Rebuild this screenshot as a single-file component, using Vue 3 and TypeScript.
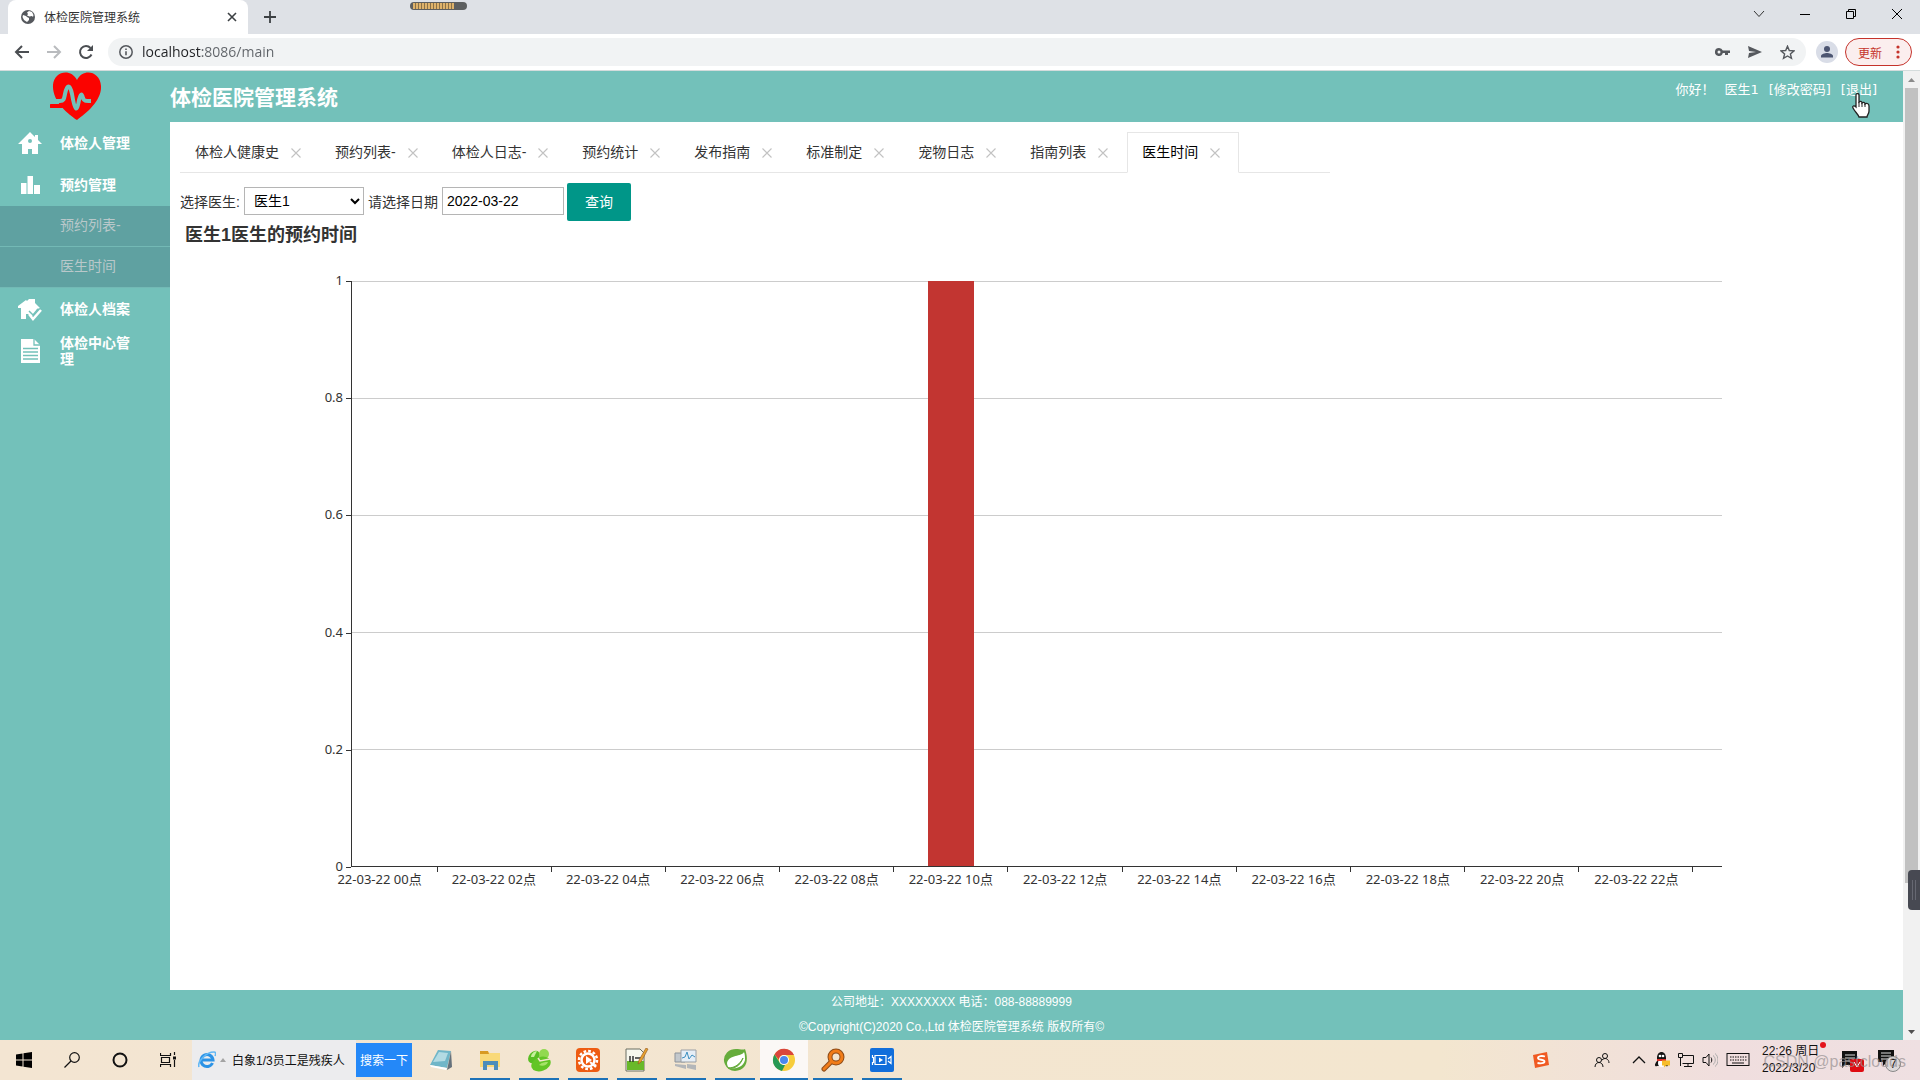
<script setup lang="ts">
import { ref } from 'vue'

interface PageTab {
  title: string
}

const tabs: PageTab[] = [
  { title: '体检人健康史' },
  { title: '预约列表-' },
  { title: '体检人日志-' },
  { title: '预约统计' },
  { title: '发布指南' },
  { title: '标准制定' },
  { title: '宠物日志' },
  { title: '指南列表' },
  { title: '医生时间' },
]
const activeTab = ref(tabs.length - 1)

const doctor = ref('医生1')
const date = ref('2022-03-22')
const address = ref('localhost:8086/main')

const levels = ['1', '0.8', '0.6', '0.4', '0.2']
const hours = Array.from({ length: 24 }, (_, i) => ({
  hour: i,
  value: i === 10 ? 1 : 0,
}))
const labels = hours
  .filter((h) => h.hour % 2 === 0)
  .map((h) => `22-03-22 ${String(h.hour).padStart(2, '0')}点`)
</script>

<template>
  <div class="screen">
    <div class="tabstrip">
      <div class="browser-tab">
        <svg width="16" height="16" viewBox="0 0 16 16">
          <circle cx="8" cy="8" r="7" fill="#55585d" />
          <path d="M3 6l3 1 1 1 2 1v2l-2 2-3-2-1.500-3zM9 2L7 3.500l1 1.500-1 1.500 2.500 1L12 7l1 1 .5-2-1.500-3z" fill="#fff" />
        </svg>
        <span class="browser-title">体检医院管理系统</span>
        <button class="plain" aria-label="关闭标签页">
          <svg width="10" height="10" viewBox="0 0 10 10"><path d="M1 1l8 8M9 1l-8 8" stroke="#3c4043" stroke-width="1.6" /></svg>
        </button>
      </div>
      <button class="plain newtab" aria-label="新标签页">
        <svg width="14" height="14" viewBox="0 0 14 14"><path d="M7 1v12M1 7h12" stroke="#3c4043" stroke-width="1.8" /></svg>
      </button>
      <div class="window-buttons">
        <button class="plain" aria-label="搜索标签页"><svg width="12" height="12" viewBox="0 0 12 12"><path d="M1 3l5 5.500 5-5.500" fill="none" stroke="#333" /></svg></button>
        <button class="plain" aria-label="最小化"><svg width="12" height="12" viewBox="0 0 12 12"><path d="M1 6.500h10" stroke="#000" /></svg></button>
        <button class="plain" aria-label="还原"><svg width="12" height="12" viewBox="0 0 12 12"><path d="M1.500 3.500h7v7h-7zM3.500 3.500v-2h7v7h-2" fill="none" stroke="#000" /></svg></button>
        <button class="plain" aria-label="关闭"><svg width="12" height="12" viewBox="0 0 12 12"><path d="M1 1l10 10M11 1L1 11" stroke="#000" /></svg></button>
      </div>
      <div class="recorder"><i></i></div>
    </div>

    <div class="toolbar">
      <button class="plain" aria-label="后退"><svg width="16" height="16" viewBox="0 0 16 16"><path d="M15 8H2M8 2L2 8l6 6" fill="none" stroke="#4b4e52" stroke-width="2" /></svg></button>
      <button class="plain" aria-label="前进"><svg width="16" height="16" viewBox="0 0 16 16"><path d="M1 8h13M8 2l6 6-6 6" fill="none" stroke="#b9bbbe" stroke-width="2" /></svg></button>
      <button class="plain" aria-label="刷新"><svg width="16" height="16" viewBox="0 0 16 16"><path d="M13.500 10.500A6 6 0 1 1 12.500 4" fill="none" stroke="#4b4e52" stroke-width="2" /><path d="M15 1v6H9z" fill="#4b4e52" /></svg></button>
      <div class="omnibox">
        <svg width="14" height="14" viewBox="0 0 14 14"><circle cx="7" cy="7" r="6.200" fill="none" stroke="#55585d" stroke-width="1.500" /><path d="M7 6.200v4M7 3.500v1.500" stroke="#55585d" stroke-width="1.600" /></svg>
        <input v-model="address" class="address" type="text" aria-label="地址栏" />
        <svg width="15" height="10" viewBox="0 0 15 10"><path d="M4 1a4 4 0 1 0 3.800 5H10v2h3V6h2V3.500H7.800A4 4 0 0 0 4 1z" fill="#55585d" /><circle cx="4" cy="5" r="1.500" fill="#f1f3f4" /></svg>
        <svg width="14" height="12" viewBox="0 0 14 12"><path d="M0 0l14 6L0 12l1-5 7-1-7-1z" fill="#55585d" /></svg>
        <svg width="15" height="15" viewBox="0 0 15 15"><path d="M7.500 1.200l1.800 4.300 4.700.400-3.600 3 1.100 4.500-4-2.400-4 2.400 1.100-4.500-3.600-3 4.700-.4z" fill="none" stroke="#55585d" stroke-width="1.400" /></svg>
      </div>
      <span class="avatar">
        <svg width="22" height="22" viewBox="0 0 22 22"><circle cx="11" cy="11" r="11" fill="#d9dde7" /><circle cx="11" cy="8" r="3" fill="#4c5571" /><path d="M5 16.500v-1.500c0-2 4-3 6-3s6 1 6 3v1.500z" fill="#4c5571" /></svg>
      </span>
      <button class="update">更新
        <svg width="4" height="14" viewBox="0 0 4 14" fill="#c5332b"><circle cx="2" cy="2" r="1.600" /><circle cx="2" cy="7" r="1.600" /><circle cx="2" cy="12" r="1.600" /></svg>
      </button>
    </div>

    <div class="viewport">
      <div class="page">
        <header class="page-header">
          <div class="logo">
            <svg width="52" height="50" viewBox="0 0 52 50">
              <path d="M27 49C18 43 2 30 3 14 4 0 21-3 27 9 33-3 50 0 51 15 52 29 37 42 27 49z" fill="#fb0300" />
              <path d="M0 30h10c4 0 4-2 5-7 2-10 5-10 7 0 3 18 5 18 7 6 2-8 3-6 4-2 1 3 2 3 8 3" fill="none" stroke="#73c1ba" stroke-width="4" />
              <path d="M1 35h11" stroke="#fb0300" stroke-width="4" stroke-linecap="round" />
            </svg>
          </div>
          <h1>体检医院管理系统</h1>
          <div class="user">
            <span>你好！</span>
            <span>医生1</span>
            <a href="#">[修改密码]</a>
            <a href="#">[退出]</a>
          </div>
        </header>

        <div class="body">
          <nav class="sidebar">
            <a href="#" class="menu">
              <svg width="24" height="24" viewBox="0 0 24 24"><path d="M12 1L0 13h4v10h6v-5h4v5h6V13h4l-4-4V4h-3v2z" fill="#fff" /><circle cx="12" cy="10" r="2" fill="#73c1ba" /></svg>
              <span>体检人管理</span>
            </a>
            <a href="#" class="menu">
              <svg width="24" height="24" viewBox="0 0 24 24"><path d="M3 10h5.500v11H3zM9.500 3H15v18H9.500zM16 12h6v9h-6z" fill="#fff" /></svg>
              <span>预约管理</span>
            </a>
            <a href="#" class="sub">预约列表-</a>
            <a href="#" class="sub">医生时间</a>
            <a href="#" class="menu">
              <svg width="24" height="24" viewBox="0 0 24 24"><path d="M0 9L8 3l1 1 2-2h6v4l5 5-3 1-1 3-5 5-2-3H8v5H3V11H0z" fill="#fff" /><path d="M11 17l4 5 8-9" fill="none" stroke="#fff" stroke-width="2.500" /><path d="M11 14l4 4 5-6" fill="none" stroke="#73c1ba" stroke-width="1.500" /></svg>
              <span>体检人档案</span>
            </a>
            <a href="#" class="menu">
              <svg width="24" height="24" viewBox="0 0 24 24"><path d="M3 0h13l6 6v18H3z" fill="#fff" /><path d="M16 0v6h6M5 9.500h15M5 13h15M5 16.500h15M5 20h15" stroke="#73c1ba" stroke-width="1.300" fill="none" /></svg>
              <span>体检中心管理</span>
            </a>
          </nav>

          <main class="content">
            <div class="tabs">
              <div v-for="(tab, i) in tabs" :key="tab.title" class="tab" :class="{ active: i === activeTab }" @click="activeTab = i">
                <span>{{ tab.title }}</span>
                <button class="plain tab-close" aria-label="关闭">
                  <svg width="10" height="10" viewBox="0 0 10 10"><path d="M.5.5l9 9M9.500.5l-9 9" stroke="#c2c2c2" stroke-width="1.100" /></svg>
                </button>
              </div>
            </div>

            <form class="filters" @submit.prevent>
              <label for="doctor">选择医生:</label>
              <select id="doctor" v-model="doctor">
                <option>医生1</option>
              </select>
              <label for="date">请选择日期</label>
              <input id="date" v-model="date" type="text" />
              <button type="submit">查询</button>
            </form>

            <h2>{{ doctor }}医生的预约时间</h2>

            <div class="chart">
              <div class="levels">
                <div v-for="l in levels" :key="l" class="level"><span>{{ l }}</span><i></i></div>
                <div class="level zero"><span>0</span><i></i></div>
              </div>
              <div class="plot">
                <div class="lines"><i v-for="l in levels" :key="l"></i></div>
                <div class="bands">
                  <div v-for="h in hours" :key="h.hour" class="band" :class="{ tick: h.hour % 2 === 1 }">
                    <div v-if="h.value" class="bar" :style="{ height: h.value * 100 + '%' }"></div>
                  </div>
                </div>
              </div>
              <div class="hours">
                <div v-for="l in labels" :key="l" class="hour"><span>{{ l }}</span></div>
              </div>
            </div>
          </main>
        </div>

        <footer class="page-footer">
          <p>公司地址：XXXXXXXX 电话：088-88889999</p>
          <p>©Copyright(C)2020 Co.,Ltd 体检医院管理系统 版权所有©</p>
        </footer>
      </div>
      <div class="scrollbar">
        <svg width="17" height="17" viewBox="0 0 17 17"><path d="M5 11l3.500-4 3.500 4z" fill="#8b8b8b" /></svg>
        <div class="track"><div class="thumb"></div></div>
        <svg width="17" height="17" viewBox="0 0 17 17"><path d="M5 7l3.500 4L12 7z" fill="#505050" /></svg>
      </div>
      <div class="handle"><i></i><i></i></div>
      <svg class="cursor" width="20" height="25" viewBox="0 0 20 25"><path d="M5 2c0-2 3-2 3 0v7c1-1 3-1 3 1 1-1 3-1 3 1 1-1 4-1 4 2v5c0 3-2 4-2 6H8c-1-3-4-5-6-9-1-2 1-3 3-1z" fill="#fff" stroke="#222" stroke-width="1.300" /><path d="M8 9v5M11 10v4M14 11v3" stroke="#222" stroke-width="1" /></svg>
    </div>

    <div class="taskbar">
      <button class="plain sys" aria-label="开始"><svg width="16" height="16" viewBox="0 0 16 16"><path d="M0 2.500L6.500 1.500v6H0zM7.500 1.300L16 0v7.500H7.500zM0 8.500h6.500v6L0 13.500zM7.500 8.500H16V16l-8.500-1.300z" fill="#000" /></svg></button>
      <button class="plain sys" aria-label="搜索"><svg width="16" height="16" viewBox="0 0 16 16"><circle cx="10.500" cy="5.500" r="4.800" fill="none" stroke="#111" stroke-width="1.200" /><path d="M7 9L.5 15.500" stroke="#111" stroke-width="1.300" /></svg></button>
      <button class="plain sys" aria-label="Cortana"><svg width="16" height="16" viewBox="0 0 16 16"><circle cx="8" cy="8" r="6.500" fill="none" stroke="#111" stroke-width="2" /></svg></button>
      <button class="plain sys" aria-label="任务视图"><svg width="16" height="16" viewBox="0 0 16 16"><path d="M.5 1v2.500h10V1M.5 15v-2.500h10V15M1.500 5.500h8v5h-8zM14.500 0v3M14.500 8v7" fill="none" stroke="#111" stroke-width="1.200" /><path d="M13 4.500h3v3h-3z" fill="#111" /></svg></button>
      <div class="widget">
        <svg width="18" height="18" viewBox="0 0 18 18"><path d="M14.500 12A6 6 0 1 1 15 9H4" fill="none" stroke="#2c93e6" stroke-width="3" /><path d="M1 16C-1 11 8 1 16 1c2 0 2 2 1 4" fill="none" stroke="#62b8f5" stroke-width="1.600" /></svg>
        <svg width="6" height="4" viewBox="0 0 6 4"><path d="M0 4l3-4 3 4z" fill="#a4a4a4" /></svg>
        <span>白象1/3员工是残疾人</span>
        <button>搜索一下</button>
      </div>
      <div class="apps">
        <span class="app idle"><svg width="24" height="24" viewBox="0 0 24 24"><path d="M1 17L9 2l13 1-4 17z" fill="#70b6c8" /><path d="M4 14L10 4l9 1-3 8z" fill="#b3dbe3" /><path d="M1 17l17 3-1 2-15-3z" fill="#fff" /><path d="M22 3l1 16-5 3z" fill="#65717b" /></svg></span>
        <span class="app"><svg width="24" height="24" viewBox="0 0 24 24"><path d="M2 4h8l2 1h10v14H2z" fill="#f9d978" /><path d="M2 3h8l1 3H2z" fill="#d89a21" /><path d="M5 22v-9h15v9h-4v-5H9v5z" fill="#4b8dba" /></svg></span>
        <span class="app"><svg width="24" height="24" viewBox="0 0 24 24"><ellipse cx="7" cy="9" rx="7" ry="5" transform="rotate(-50 7 9)" fill="#59be23" /><ellipse cx="17" cy="6" rx="5" ry="5" fill="#92d950" /><ellipse cx="14" cy="16" rx="10" ry="7" transform="rotate(-20 14 16)" fill="#63c526" /><path d="M11 10l2 3 10-2" stroke="#f3e6cf" stroke-width="1.500" fill="none" /><path d="M4 9c0-3 3-6 6-6l-3 6z" fill="#c6f09b" /><path d="M12 17c3-3 6-3 9-3-1 3-5 5-9 3z" fill="#a5e268" /></svg></span>
        <span class="app"><svg width="24" height="24" viewBox="0 0 24 24"><rect width="24" height="24" rx="4" fill="#ee5c12" /><circle cx="12" cy="12" r="9" fill="none" stroke="#fff" stroke-width="2.500" stroke-dasharray="2.700 2" /><circle cx="12" cy="12" r="6.500" fill="none" stroke="#fff" stroke-width="2.500" /><path d="M10 8l6 4-6 4z" fill="#fff" /><path d="M14 14l6 5" stroke="#fff" stroke-width="2" /></svg></span>
        <span class="app"><svg width="24" height="24" viewBox="0 0 24 24"><path d="M1 1h14l4 4v18H1z" fill="#f7f7ed" stroke="#6a6f62" /><path d="M2 13h17v9H2z" fill="#69b929" /><path d="M5 8v6M8 8v6M10 10h7" stroke="#333" stroke-width="1.500" /><path d="M21 0l2 1-7 13-3 2 1-4z" fill="#e6a12d" stroke="#8e5422" stroke-width=".6" /></svg></span>
        <span class="app"><svg width="24" height="24" viewBox="0 0 24 24"><path d="M1 5h10v9H1z" fill="#c3c8cc" stroke="#8d9399" /><path d="M7 2h15v12H7z" fill="#e6eef6" stroke="#9a9fa5" /><path d="M8 10l3-1 2-5 2 7 3-4 3 2" fill="none" stroke="#3d8fc0" /><path d="M1 16l11 1v4L1 18zM13 16l9 1v5l-9-2z" fill="#b3b6b9" /></svg></span>
        <span class="app"><svg width="24" height="24" viewBox="0 0 24 24"><path d="M22 1c4 11 2 21-10 22A11 11 0 0 1 4 4.500C10-2 19 3 22 1z" fill="#66ac3c" /><path d="M21 4c-2 5-15 2-17 11 0 2 1 4 2 5 6 1 14 0 16-8 0-3 0-6-1-8z" fill="#fff" /><path d="M5 20c7 0 12-4 15-10-3 8-8 11-15 10z" fill="#66ac3c" stroke="#66ac3c" /></svg></span>
        <span class="app current"><svg width="24" height="24" viewBox="0 0 24 24"><circle cx="12" cy="12" r="11" fill="#f7cd3c" /><path d="M2.500 6.500A11 11 0 0 1 22 7H12a5 5 0 0 0-5 5z" fill="#d9463c" /><path d="M2.500 6.500L8 15a5 5 0 0 0 5 2l-3 6A11 11 0 0 1 2.500 6.500z" fill="#269955" /><circle cx="12" cy="12" r="5" fill="#fff" /><circle cx="12" cy="12" r="4" fill="#4b87ed" /></svg></span>
        <span class="app"><svg width="24" height="24" viewBox="0 0 24 24"><circle cx="15" cy="9" r="6" fill="none" stroke="#8c4b18" stroke-width="5" /><path d="M10 14l-7 7" stroke="#8c4b18" stroke-width="5" stroke-linecap="round" /><circle cx="15" cy="9" r="6" fill="none" stroke="#f17c18" stroke-width="3" /><path d="M10 14l-7 7" stroke="#f17c18" stroke-width="3" stroke-linecap="round" /></svg></span>
        <span class="app"><svg width="24" height="24" viewBox="0 0 24 24"><rect width="24" height="24" rx="2" fill="#116edb" /><path d="M5 7.500h11v9H5zM2.500 7v2.500h1v5h-1V17M18 11l3-2.500v7L18 13" fill="none" stroke="#fff" stroke-width="1.200" /><path d="M9 9.500l4 2.500-4 2.500z" fill="#fff" /></svg></span>
      </div>
      <div class="tray">
        <svg class="ime" width="16" height="16" viewBox="0 0 16 16"><path d="M0 3L14 0l2 13L2 16z" fill="#f05a22" /><path d="M12 4.500c-3-1-7-.500-7 1.500 0 2.500 6.500 1 6.500 3.500 0 2-4 2-7 1.500" fill="none" stroke="#fff" stroke-width="1.800" /></svg>
        <svg class="people" width="16" height="16" viewBox="0 0 16 16"><circle cx="5" cy="8" r="2.500" fill="none" stroke="#111" /><circle cx="11" cy="4" r="2.500" fill="none" stroke="#111" /><path d="M1 15c0-6 8-6 8 0M8 8c3-3 7-1 7 3" fill="none" stroke="#111" /></svg>
        <svg width="14" height="16" viewBox="0 0 14 16"><path d="M1 11l6-6 6 6" fill="none" stroke="#111" stroke-width="1.300" /></svg>
        <svg width="16" height="16" viewBox="0 0 16 16"><path d="M3 9V6c0-8 9-8 9 0v3c4 5 1 6 0 5H3c-1 1-4 0 0-5z" fill="#151515" /><ellipse cx="7.500" cy="11" rx="3.500" ry="4" fill="#fff" /><circle cx="6" cy="4" r="1.300" fill="#fff" /><circle cx="9" cy="4" r="1.300" fill="#fff" /><path d="M3 7h9v2H3z" fill="#df3029" /><path d="M8 8.500h8v5h-4l-2 2v-2H8z" fill="#f7bd2a" /></svg>
        <svg width="16" height="16" viewBox="0 0 16 16"><path d="M4.500 3.500h11v8h-11M10 12v2.500M6 14.500h8M.5 1.500h4v4h-4zM2.500 6v8" fill="none" stroke="#111" /></svg>
        <svg width="16" height="16" viewBox="0 0 16 16"><path d="M1 5.500h3l3-3.500v12L4 10.500H1z" fill="none" stroke="#111" /><path d="M9 5.500c1 1 1 4 0 5" fill="none" stroke="#111" /><path d="M11 3.500c3 2 3 7 0 9M13 1.500c4 3 4 10 0 13" fill="none" stroke="#aaa" /></svg>
        <svg width="24" height="16" viewBox="0 0 24 16"><rect x="1" y="1.500" width="22" height="12" fill="none" stroke="#111" /><path d="M4 5h17M4 8h17" stroke="#111" stroke-dasharray="1.500 1" /><path d="M6 11h12" stroke="#111" /></svg>
        <div class="clock"><span>22:26 周日</span><span>2022/3/20</span><i></i></div>
        <svg class="note" width="24" height="24" viewBox="0 0 24 24"><path d="M2 3h15v14H5l-3 3z" fill="#111" /><path d="M5 7h10M5 10h10M5 13h8" stroke="#ddd" /><rect x="10" y="11" width="14" height="13" rx="2" fill="#df0c12" /><path d="M14 14l3 5 3-5" stroke="#fff" fill="none" /></svg>
        <div class="messages">
          <svg width="24" height="24" viewBox="0 0 24 24"><path d="M0 2h16v12H9l-4 4v-4H0z" fill="#111" /><path d="M3 5h10M3 8h10M3 11h8" stroke="#ddd" /><circle cx="15" cy="16" r="7.500" fill="#dedada" stroke="#888" /></svg>
          <span>7</span>
        </div>
        <span class="credit">CSDN @pastclouds</span>
      </div>
    </div>
  </div>
</template>

<style>
body {
  margin: 0;
}
</style>

<style scoped>
* {
  box-sizing: border-box;
}
.screen {
  display: flex;
  flex-direction: column;
  height: 100vh;
  overflow: hidden;
  font: 14px "Liberation Sans", "Noto Sans CJK SC", sans-serif;
  color: #333;
}
svg {
  display: block;
  flex: none;
}
a {
  color: inherit;
  text-decoration: none;
}
.plain {
  display: flex;
  align-items: center;
  justify-content: center;
  padding: 0;
  border: 0;
  background: none;
}
.tabstrip {
  position: relative;
  display: flex;
  height: 34px;
  padding-left: 8px;
  background: #dee1e6;
}
.browser-tab {
  display: flex;
  align-items: center;
  width: 240px;
  padding: 0 11px 0 12px;
  border-radius: 8px 8px 0 0;
  background: #fff;
}
.browser-title {
  flex: 1;
  margin-left: 8px;
  padding-bottom: 2px;
  font-size: 12px;
}
.newtab {
  width: 44px;
}
.window-buttons {
  display: flex;
  gap: 34px;
  height: 28px;
  margin: 0 17px 0 auto;
}
.recorder {
  position: absolute;
  top: 2px;
  left: 410px;
  width: 57px;
  height: 8px;
  padding: 1px 13px 1px 3px;
  border-radius: 4px;
  background: #5d5f60;
}
.recorder i {
  display: block;
  height: 6px;
  background: repeating-linear-gradient(90deg, #dfb36b 0 2px, #8a7148 2px 3px);
}
.toolbar {
  display: flex;
  align-items: center;
  gap: 16px;
  height: 37px;
  padding: 0 8px 0 14px;
  border-bottom: 1px solid #d4dcdc;
  background: #fff;
}
.omnibox {
  display: flex;
  flex: 1;
  align-items: center;
  gap: 18px;
  height: 28px;
  margin: 0 -6px 0 -2px;
  padding: 0 11px;
  border-radius: 14px;
  background: #f1f3f4;
}
.address {
  flex: 1;
  min-width: 0;
  height: 26px;
  margin-left: -9px;
  padding: 0 0 2px;
  border: 0;
  outline: 0;
  background: linear-gradient(90deg, #202124 60px, #5f6368 60px);
  background-clip: text;
  font: 14px "Open Sans", sans-serif;
  color: transparent;
}
.update {
  display: flex;
  align-items: center;
  justify-content: space-between;
  width: 67px;
  height: 28px;
  margin-left: -9px;
  padding: 0 11px 0 12px;
  border: 1px solid #c5332b;
  border-radius: 14px;
  background: #fbeeee;
  font: 12px "Noto Sans CJK SC", sans-serif;
  color: #c5332b;
}
.viewport {
  position: relative;
  display: flex;
  flex: 1;
  min-height: 0;
}
.page {
  display: flex;
  flex: 1;
  flex-direction: column;
  min-width: 0;
  background: #73c1ba;
}
.page-header {
  display: flex;
  height: 51px;
  color: #fff;
}
.logo {
  width: 170px;
  padding-left: 50px;
}
h1 {
  margin: 0;
  font-size: 21px;
  line-height: 54px;
}
.user {
  display: flex;
  gap: 10px;
  margin-left: auto;
  padding-right: 26px;
  font: 13px/38px "DejaVu Sans", "Noto Sans CJK SC", sans-serif;
}
.body {
  display: flex;
  flex: 1;
  min-height: 0;
}
.sidebar {
  width: 170px;
  font-weight: 700;
  color: #fff;
}
.menu {
  display: flex;
  align-items: center;
  gap: 18px;
  height: 42px;
  padding: 0 40px 0 18px;
  line-height: 16px;
}
.menu span {
  padding-bottom: 1px;
}
.sub {
  display: block;
  height: 41px;
  padding-left: 60px;
  border-bottom: 1px solid #73b9b5;
  background: #5fa1a1;
  font-weight: 400;
  line-height: 38px;
  color: #b9c8ca;
}
.content {
  flex: 1;
  min-width: 0;
  padding: 10px;
  background: #fff;
}
.tabs {
  display: flex;
  width: 1150px;
  max-width: 100%;
  height: 41px;
  border-bottom: 1px solid #e6e6e6;
}
.tab {
  display: flex;
  align-items: center;
  height: 41px;
  padding: 0 15px;
  white-space: nowrap;
}
.tab span {
  padding-bottom: 3px;
}
.tab.active {
  padding: 0 14px;
  border: 1px solid #e6e6e6;
  border-bottom-color: #fff;
  color: #000;
}
.tab-close {
  width: 18px;
  height: 18px;
  margin-left: 8px;
}
.filters {
  display: flex;
  align-items: center;
  gap: 4px;
  height: 38px;
  margin-top: 10px;
}
.filters label {
  padding-bottom: 3px;
  white-space: nowrap;
}
.filters select,
.filters input {
  height: 28px;
  margin-bottom: 2px;
  border: 1px solid #b5b5b5;
  border-radius: 0;
  background: #fff;
  font: inherit;
  color: #000;
}
.filters select {
  width: 120px;
  padding-left: 5px;
}
.filters input {
  width: 122px;
  padding: 0 4px;
}
.filters button {
  width: 64px;
  height: 38px;
  margin-left: -1px;
  padding-bottom: 3px;
  border: 0;
  border-radius: 2px;
  background: #009688;
  font: inherit;
  color: #fff;
}
h2 {
  margin: 0 0 0 5px;
  font-size: 18px;
  line-height: 28px;
}
.chart {
  display: grid;
  grid-template-rows: 586px 30px;
  grid-template-columns: 171px 1fr;
  margin: 32px 171px 0 0;
  font: 13px/16px "Noto Sans", "Noto Sans CJK SC", sans-serif;
}
.levels {
  display: flex;
  flex-direction: column;
}
.level {
  display: flex;
  flex: 1;
  align-items: flex-start;
  justify-content: flex-end;
  gap: 3px;
}
.level span {
  margin-top: -9px;
}
.level i {
  width: 5px;
  height: 1px;
  background: #333;
}
.level.zero {
  flex: none;
  height: 0;
}
.plot {
  display: grid;
  border-bottom: 1px solid #333;
  border-left: 1px solid #333;
}
.lines,
.bands {
  display: flex;
  grid-area: 1 / 1;
}
.lines {
  flex-direction: column;
}
.lines i {
  flex: 1;
  border-top: 1px solid #ccc;
}
.band {
  position: relative;
  display: flex;
  flex: 1;
  align-items: flex-end;
  justify-content: center;
}
.band.tick::after {
  position: absolute;
  right: 50%;
  bottom: -6px;
  width: 1px;
  height: 5px;
  background: #333;
  content: "";
}
.bar {
  width: 80%;
  background: #c23531;
}
.hours {
  display: flex;
  grid-column: 2;
}
.hour {
  display: flex;
  flex: 1;
  padding-top: 4px;
}
.hour span {
  display: flex;
  justify-content: center;
  width: 50%;
  white-space: nowrap;
}
.page-footer {
  height: 50px;
  font-size: 12px;
  line-height: 25px;
  color: #fff;
  text-align: center;
}
.page-footer p {
  margin: 0;
}
.scrollbar {
  display: flex;
  flex-direction: column;
  width: 17px;
  background: #f1f1f1;
}
.track {
  flex: 1;
  padding: 0 2px;
}
.thumb {
  height: 85%;
  background: #c1c1c1;
}
.handle {
  position: absolute;
  top: 799px;
  right: 0;
  display: flex;
  gap: 2px;
  width: 12px;
  height: 40px;
  padding: 10px 4px;
  border-radius: 4px 0 0 4px;
  background: #474952;
}
.handle i {
  width: 1px;
  background: #666872;
}
.cursor {
  position: absolute;
  top: 22px;
  right: 49px;
}
.taskbar {
  display: flex;
  height: 40px;
  background: linear-gradient(90deg, #f3e5d2, #f3e6cf 75%, #f0dede 90%, #efe0e2);
  font: 12px "Liberation Sans", "Noto Sans CJK SC", sans-serif;
  color: #111;
}
.sys {
  width: 48px;
}
.widget {
  display: flex;
  align-items: center;
  gap: 4px;
  width: 220px;
  padding-left: 6px;
  background: linear-gradient(90deg, #ececee 164px, transparent 164px);
  white-space: nowrap;
}
.widget span {
  flex: 1;
  margin-left: 2px;
  padding-bottom: 2px;
}
.widget button {
  width: 56px;
  height: 34px;
  padding: 0 0 2px;
  border: 0;
  background: #2488f8;
  font: inherit;
  color: #fff;
}
.apps {
  display: flex;
  gap: 1px;
  margin-left: 5px;
}
.app {
  display: flex;
  align-items: center;
  justify-content: center;
  width: 48px;
  background: linear-gradient(#1c72b8, #1c72b8) center bottom / 40px 2px no-repeat;
}
.app.idle {
  background: none;
}
.app.current {
  border-bottom: 2px solid #1c72b8;
  padding-top: 2px;
  background: #fbf8f6;
}
.tray {
  position: relative;
  display: flex;
  align-items: center;
  gap: 8px;
  margin-left: auto;
  padding-right: 18px;
}
.ime {
  margin-right: 37px;
}
.people {
  margin-right: 14px;
}
.clock {
  position: relative;
  display: flex;
  flex-direction: column;
  width: 64px;
  margin-left: 4px;
  line-height: 17px;
  white-space: nowrap;
}
.clock i {
  position: absolute;
  top: -1px;
  right: 0;
  width: 6px;
  height: 6px;
  border-radius: 3px;
  background: #e4141c;
}
.note {
  margin-left: 6px;
}
.messages {
  position: relative;
  margin-left: 6px;
}
.messages span {
  position: absolute;
  top: 9px;
  left: 12px;
}
.credit {
  position: absolute;
  right: 14px;
  bottom: 8px;
  font-size: 16px;
  line-height: 20px;
  color: #968f91b3;
  white-space: nowrap;
}
</style>
